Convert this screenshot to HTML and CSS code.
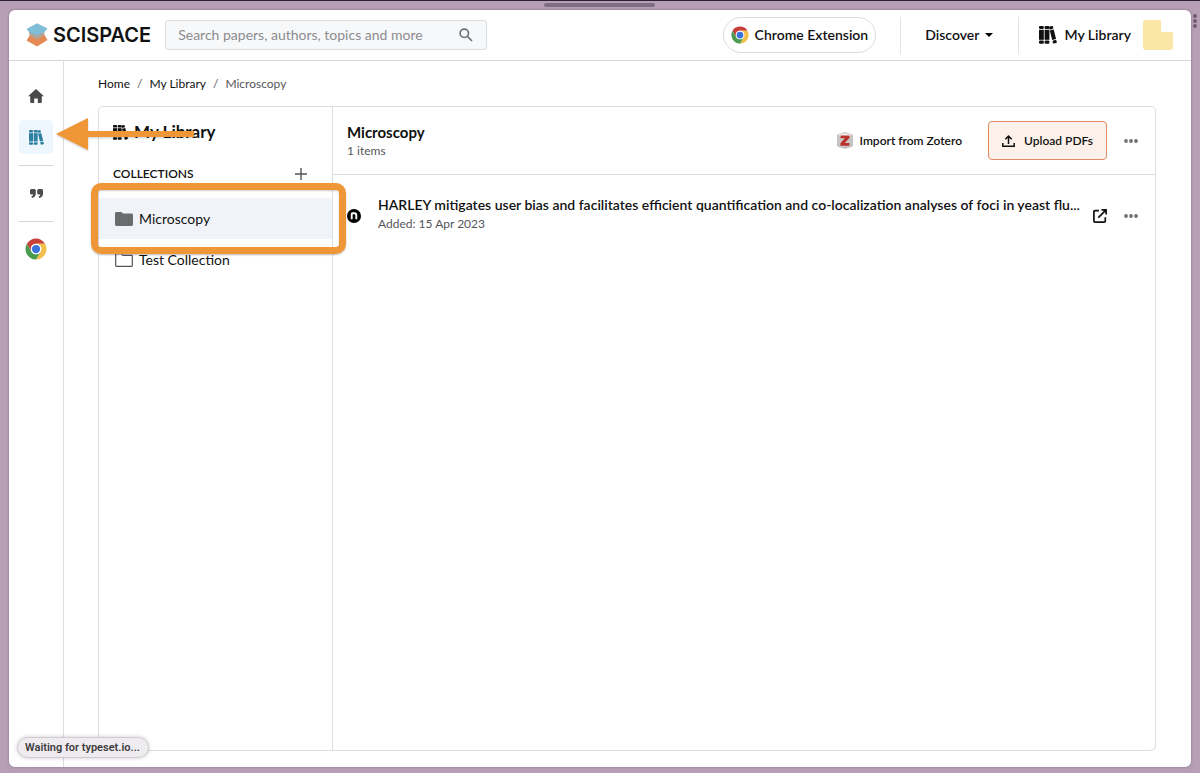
FILE: index.html
```
<!DOCTYPE html>
<html lang="en">
<head>
<meta charset="utf-8">
<title>Microscopy - My Library</title>
<link rel="stylesheet" href="styles.css">
</head>
<body>
<svg class="defs" aria-hidden="true">
  <symbol id="books" viewBox="0 0 18 18">
    <g fill="currentColor">
      <rect x="0" y="0" width="4.8" height="3" rx="1"/><rect x="0" y="3.800" width="4.8" height="10"/><rect x="0" y="14.6" width="4.8" height="3.2" rx="1"/>
      <rect x="5.600" y="0" width="4.8" height="3" rx="1"/><rect x="5.600" y="3.800" width="4.8" height="10"/><rect x="5.600" y="14.6" width="4.8" height="3.2" rx="1"/>
      <g transform="rotate(-14 14 9)"><rect x="12" y="0" width="4" height="3" rx="1"/><rect x="12" y="3.800" width="4" height="9.800"/><rect x="12" y="14.4" width="4" height="3.2" rx="1"/></g>
    </g>
  </symbol>
  <symbol id="chrome" viewBox="0 0 48 48">
    <circle cx="24" cy="24" r="23" fill="#fff"/>
    <path fill="#c9403a" d="M4.1 12.5A23 23 0 0 1 43.9 12.5L24 12.5A11.5 11.5 0 0 0 14 18.2L14 29.8Z"/>
    <path fill="#f3c14b" d="M43.9 12.5A23 23 0 0 1 24 47L34 29.8A11.5 11.5 0 0 0 24 12.5Z"/>
    <path fill="#4a9a50" d="M24 47A23 23 0 0 1 4.1 12.5L14 29.8A11.5 11.5 0 0 0 34 29.8Z"/>
    <circle cx="24" cy="24" r="11.5" fill="#fff"/>
    <circle cx="24" cy="24" r="9" fill="#3c72dc"/>
  </symbol>
  <symbol id="dots" viewBox="0 0 14 4">
    <g fill="currentColor"><circle cx="2" cy="2" r="1.9"/><circle cx="7" cy="2" r="1.9"/><circle cx="12" cy="2" r="1.9"/></g>
  </symbol>
</svg>

<div class="grip"></div>
<svg class="frame-dots" viewBox="0 0 4 14" fill="#6c5a70"><circle cx="2" cy="2" r="1.9"/><circle cx="2" cy="7" r="1.9"/><circle cx="2" cy="12" r="1.9"/></svg>

<div class="window">
  <header class="topbar">
    <a class="logo" href="#">
      <svg width="22" height="24" viewBox="0 0 22 24"><path fill="#e58a54" d="M4 12 11 12 18 11 21.500 17 11 23.500.5 17.500Z"/><path fill="#b2a597" d="M3 9 11 8 18.500 9 18 12.500 11 16.500 3.500 12.500Z"/><path fill="#7fbcd6" d="M11 .3 21.500 5.500 18.500 9 11 12.500 3.500 9.500.5 6Z"/></svg>
      <span>SCISPACE</span>
    </a>
    <form class="search">
      <input type="text" aria-label="Search" placeholder="Search papers, authors, topics and more">
      <button type="button" aria-label="Search"><svg width="14" height="14" viewBox="0 0 14 14" fill="none" stroke="#6d6e72" stroke-width="1.6"><circle cx="5.3" cy="5.3" r="4.2"/><path d="M8.400 8.400 13 13"/></svg></button>
    </form>
    <nav class="topnav">
      <a class="pill" href="#"><svg width="18" height="18"><use href="#chrome"/></svg>Chrome Extension</a>
      <button class="discover" type="button">Discover<svg width="8" height="4" viewBox="0 0 8 4"><path d="M0 0H8L4 4Z"/></svg></button>
      <a class="library" href="#"><svg width="18" height="18"><use href="#books"/></svg>My Library</a>
      <svg class="avatar" width="30" height="30" viewBox="0 0 30 30"><path fill="#fae6a6" d="M3 0H18V12H30V27Q30 30 27 30H3Q0 30 0 27V3Q0 0 3 0Z"/></svg>
    </nav>
  </header>

  <div class="body">
    <nav class="rail">
      <a class="tile" href="#" aria-label="Home"><svg width="16" height="14" viewBox="0 0 16 14"><path fill="#4a4a4a" d="M8 0 16 7.300H13.800V13Q13.800 14 12.800 14H9.800V9.500H6.200V14H3.200Q2.200 14 2.200 13V7.300H0Z"/></svg></a>
      <a class="tile active" href="#" aria-label="My Library"><svg width="15" height="15"><use href="#books"/></svg></a>
      <hr>
      <a class="tile" href="#" aria-label="Citations"><svg width="13" height="9" viewBox="0 0 13 9" fill="#4a4a4a"><path d="M1.500 0H4.500Q5.800 0 5.800 1.500V4.500Q5.800 8 2.200 9L1.300 7.600Q3.200 7 3.200 5.500H1.500Q0 5.500 0 4V1.500Q0 0 1.500 0Z"/><path d="M8.700 0H11.700Q13 0 13 1.500V4.500Q13 8 9.400 9L8.500 7.600Q10.400 7 10.400 5.500H8.700Q7.200 5.500 7.200 4V1.500Q7.200 0 8.700 0Z"/></svg></a>
      <hr>
      <a class="tile" href="#" aria-label="Chrome Extension"><svg width="22" height="22"><use href="#chrome"/></svg></a>
    </nav>

    <main class="main">
      <nav class="crumbs" aria-label="Breadcrumb"><a href="#">Home</a><span>/</span><a href="#">My Library</a><span>/</span><span>Microscopy</span></nav>
      <div class="panel">
        <aside class="collections">
          <h2><svg width="15" height="15"><use href="#books"/></svg>My Library</h2>
          <div class="sub"><h3>COLLECTIONS</h3><button type="button" aria-label="Add collection"><svg width="12" height="12" viewBox="0 0 12 12" stroke="#55565a" stroke-width="1.400"><path d="M6 0V12M0 6H12"/></svg></button></div>
          <ul>
            <li><a class="selected" href="#"><svg width="18" height="14" viewBox="0 0 18 14"><path fill="#6b6c6e" d="M1.500 0H6.500L8 1.600H16.500Q18 1.600 18 3V12.600Q18 14 16.500 14H1.500Q0 14 0 12.600V1.400Q0 0 1.500 0Z"/></svg>Microscopy</a></li>
            <li><a href="#"><svg width="18" height="14" viewBox="0 0 18 14"><path fill="none" stroke="#55565a" stroke-width="1.200" d="M1.500.7H6.500L8 2.300H16.500Q17.300 2.300 17.300 3V12.400Q17.300 13.300 16.500 13.300H1.500Q.7 13.300.7 12.400V1.500Q.7.7 1.500.7Z"/></svg>Test Collection</a></li>
          </ul>
        </aside>
        <section class="papers">
          <div class="heading">
            <div class="name"><h1>Microscopy</h1><p>1 items</p></div>
            <button class="zotero" type="button"><svg width="16" height="17" viewBox="0 0 16 17"><path fill="#c9c5c4" stroke="#b0aaaa" stroke-width=".6" d="M8 .5 15.500 3V14L8 16.500.5 14V3Z"/><path fill="#f0eeee" d="M8 1 15 3.300 8 5 1 3.300Z"/><path fill="#b9302c" d="M3.600 3.400H12.400V6L7.700 11H12.400V13.800H3.400V11.200L8 6.200H3.600Z"/></svg>Import from Zotero</button>
            <button class="upload" type="button"><svg width="13" height="12" viewBox="0 0 13 12" fill="none" stroke="#111" stroke-width="1.500"><path d="M.8 8V11.200H12.200V8M6.500 9V1.200M3.300 4.200 6.500 1.100 9.700 4.200"/></svg>Upload PDFs</button>
            <button class="more" type="button" aria-label="More"><svg width="14" height="4"><use href="#dots"/></svg></button>
          </div>
          <article class="paper">
            <svg width="14" height="14" viewBox="0 0 14 14"><circle cx="7" cy="7" r="7"/><path fill="none" stroke="#fff" stroke-width="1.900" d="M4.700 10.300V5Q4.700 4.300 5.500 4.300H7.400Q9.300 4.300 9.300 6.300V10.300"/></svg>
            <div class="info"><a href="#">HARLEY mitigates user bias and facilitates efficient quantification and co-localization analyses of foci in yeast flu...</a><p>Added: 15 Apr 2023</p></div>
            <button class="open" type="button" aria-label="Open"><svg width="14" height="14" viewBox="0 0 14 14" fill="none" stroke="#111" stroke-width="1.700"><path d="M6 1.700H2Q.9 1.700.9 2.800V12Q.9 13.100 2 13.100H11.200Q12.300 13.100 12.300 12V8.200M5.300 8.700 12.800 1.200M8.500.9H13.100V5.500"/></svg></button>
            <button class="more" type="button" aria-label="More"><svg width="14" height="4"><use href="#dots"/></svg></button>
          </article>
        </section>
      </div>
    </main>
  </div>
</div>

<div class="status">Waiting for typeset.io...</div>
<svg class="arrow" width="140" height="36" viewBox="0 0 140 36"><path fill="#ef9637" d="M0 18 32 2V15H138V21H32V34Z"/></svg>
<div class="highlight"></div>
</body>
</html>
```
FILE: styles.css
```
* { box-sizing: border-box; }

body {
  position: relative;
  display: flex;
  min-height: 100vh;
  margin: 0;
  padding: 9px 9px 6px;
  border-top: 1px solid #2d1f38;
  background: #b79fb5;
  color: #111;
  font: 14px/20px Lato, "Liberation Sans", sans-serif;
}

a { color: inherit; text-decoration: none; }
button { display: flex; align-items: center; padding: 0; border: 0; background: none; color: inherit; font: inherit; cursor: pointer; }
h1, h2, h3, p, ul { margin: 0; padding: 0; }
ul { list-style: none; }
svg { display: block; flex: none; }
.defs { position: absolute; width: 0; height: 0; }

.grip {
  position: absolute;
  top: 2px;
  left: 50%;
  width: 111px;
  height: 4px;
  margin-left: -56px;
  border-radius: 2px;
  background: #806c84;
}

.frame-dots { position: absolute; top: 13px; right: 3px; width: 4px; height: 14px; }

.window {
  flex: 1;
  display: flex;
  flex-direction: column;
  min-width: 0;
  border-radius: 6px;
  background: #fff;
  box-shadow: 0 0 2px 1px #a08ba0;
}

.topbar {
  display: flex;
  align-items: center;
  height: 51px;
  padding: 0 18px 0 17px;
  border-bottom: 1px solid #d8d8da;
}

.logo { display: flex; align-items: center; gap: 5px; font: 600 20px/24px Inter, "Liberation Sans", sans-serif; }

.search {
  display: flex;
  align-items: center;
  width: 322px;
  height: 30px;
  margin-left: 14px;
  padding: 0 13px 0 12px;
  border: 1px solid #dcdde0;
  border-radius: 3px;
  background: #f7f8fa;
}
.search input { flex: 1; min-width: 0; padding: 0; border: 0; outline: 0; background: none; font: inherit; }
.search input::placeholder { color: #8b8c90; opacity: 1; }

.topnav { display: flex; align-items: center; margin-left: auto; font-weight: 600; }
.pill { display: flex; align-items: center; gap: 6px; height: 36px; padding: 0 7px; border: 1px solid #d9dce0; border-radius: 18px; }
.discover { gap: 6px; height: 37px; margin-left: 24px; padding: 0 25px 0 24px; border: solid #e4e4e6; border-width: 0 1px; }
.library { display: flex; align-items: center; gap: 7px; margin-left: 20px; }
.avatar { margin-left: 12px; }

.body { flex: 1; display: flex; }

.rail {
  display: flex;
  flex-direction: column;
  align-items: center;
  width: 55px;
  padding-top: 18px;
  border-right: 1px solid #dddddf;
}
.tile { display: flex; align-items: center; justify-content: center; width: 34px; height: 34px; border-radius: 4px; }
.tile.active { margin-top: 7px; background: #eff7fe; color: #2f7fa0; }
.rail hr { width: 34px; height: 1px; margin: 11px 0 10px; border: 0; background: #d6d6d8; }

.main { flex: 1; display: flex; flex-direction: column; min-width: 0; padding: 14px 35px 16px 34px; }
.crumbs { display: flex; gap: 7px; margin-bottom: 13px; font-size: 12px; line-height: 18px; }
.crumbs span { color: #55565a; }

.panel { flex: 1; display: flex; border: 1px solid #dddddf; border-radius: 5px; }

.collections { width: 234px; padding-top: 13px; border-right: 1px solid #dddddf; }
.collections h2 { display: flex; align-items: center; gap: 6px; padding-left: 14px; font-size: 17px; line-height: 24px; }
.sub { display: flex; align-items: center; justify-content: space-between; height: 24px; margin: 18px 25px 12px 14px; }
.sub h3 { font-size: 12px; font-weight: 600; }
.collections li a { display: flex; align-items: center; gap: 6px; height: 41px; padding-left: 16px; }
.collections li .selected { background: #f0f4f8; }

.papers { flex: 1; min-width: 0; }
.heading { display: flex; align-items: center; height: 68px; padding: 0 17px 0 14px; border-bottom: 1px solid #dddddf; font-size: 12px; font-weight: 600; }
.name { flex: 1; }
.name h1 { font-size: 15px; line-height: 20px; }
.name p { color: #55565a; font-weight: 400; line-height: 18px; }
.zotero { gap: 7px; }
.upload { gap: 9px; height: 39px; margin: 0 17px 0 26px; padding: 0 13px; border: 1px solid #df8a60; border-radius: 4px; background: #fcf1ea; }
.more { color: #707174; }

.paper { display: flex; align-items: center; padding: 20px 17px 16px 14px; }
.info { flex: 1; min-width: 0; margin: 0 0 4px 17px; }
.info a { display: block; overflow: hidden; font-weight: 600; white-space: nowrap; text-overflow: ellipsis; }
.info p { color: #55565a; font-size: 12px; line-height: 18px; }
.open { margin: 0 17px 0 10px; }

.status {
  position: absolute;
  bottom: 15px;
  left: 17px;
  height: 21px;
  padding: 0 8px 0 7px;
  border: 1px solid #cfcbd0;
  border-radius: 11px;
  background: #efecf0;
  box-shadow: 0 0 4px #0003;
  color: #3d3b40;
  font-family: Roboto, sans-serif;
  font-size: 11px;
  font-weight: 600;
  line-height: 19px;
}

.arrow { position: absolute; top: 115px; left: 56px; filter: drop-shadow(0 1px 1px #0003); }
.highlight { position: absolute; top: 182px; left: 91px; width: 255px; height: 71px; border: 7px solid #ef9637; border-radius: 10px; box-shadow: 0 1px 2px #0004, inset 0 1px 2px #0003; }
```
